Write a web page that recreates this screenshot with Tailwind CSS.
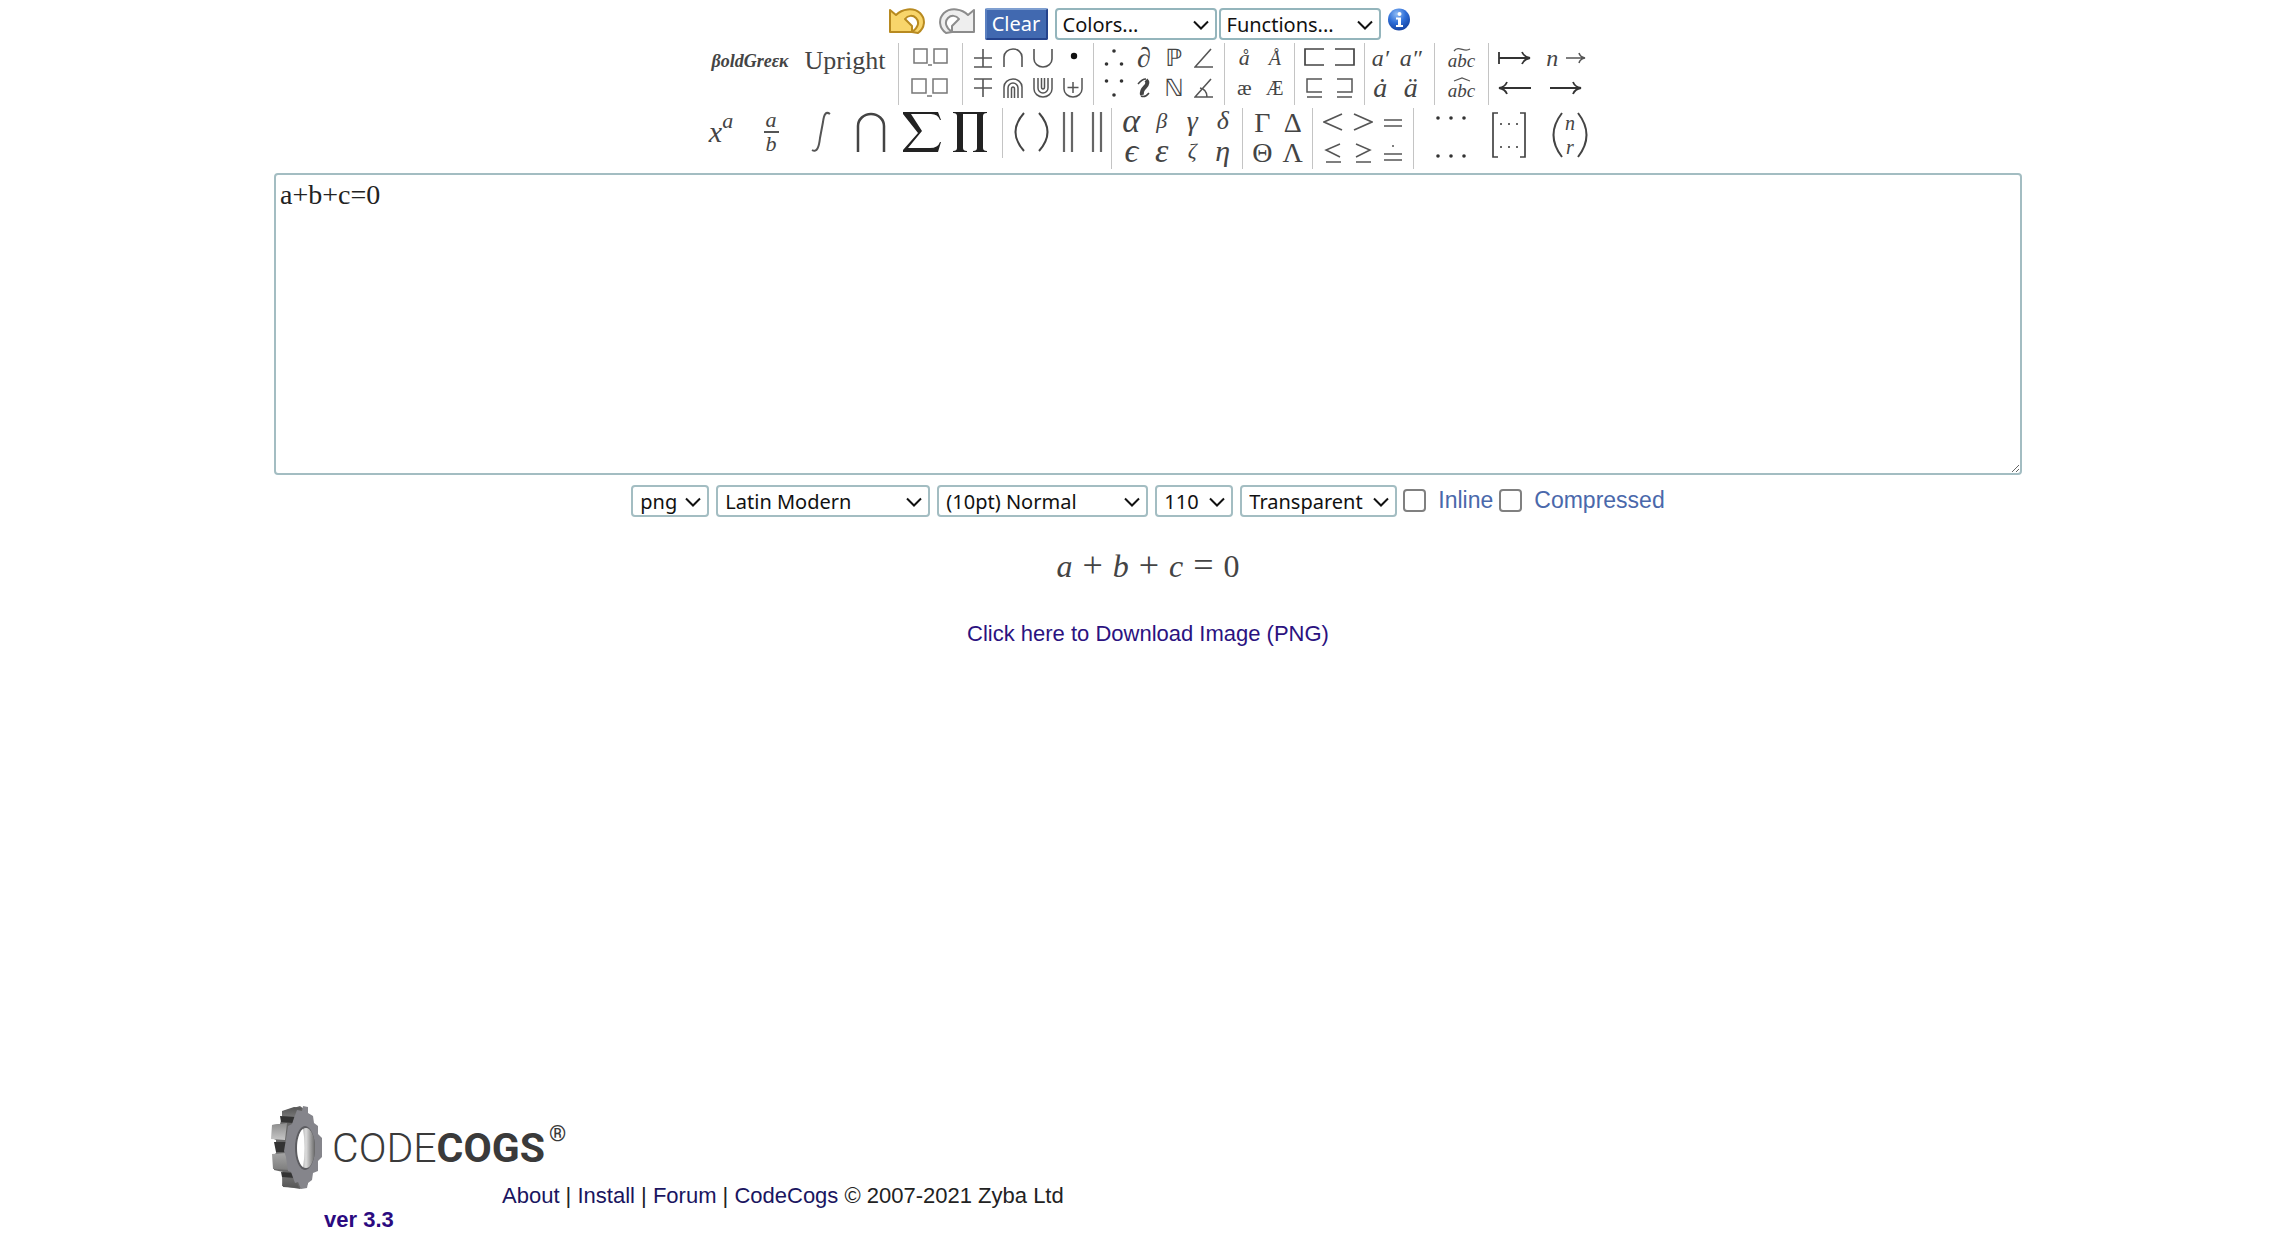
<!DOCTYPE html>
<html lang="en">
<head>
    <meta charset="UTF-8">
    <meta name="viewport" content="width=device-width, initial-scale=1.0">
    <title>CodeCogs Equation Editor</title>
    <script src="https://cdn.jsdelivr.net/npm/@tailwindcss/browser@4"></script>
</head>
<body class="bg-white min-h-screen flex flex-col font-['Liberation_Sans',Arial,sans-serif] text-[22px] text-[#222]">

    <!-- shared symbols -->
    <svg class="hidden">
        <symbol id="chevron" viewBox="0 0 16 10"><path d="M1 1.5l7 7 7-7" fill="none" stroke="#111" stroke-width="2"/></symbol>
        <symbol id="undo" viewBox="0 0 36 26"><path d="M1 2l6 5C13 1 24-1 31 5c6 6 5 15-2 20l-6-1c6-4 8-10 4-14-3-3-8-3-11 1l7 7v6H1z" stroke-width="2" stroke-linejoin="round"/></symbol>
    </svg>

    <main class="px-[274px] pt-2 flex flex-col items-center">
        <!-- top bar -->
        <div class="flex h-8 pl-[3px] font-['Noto_Sans',Tahoma,sans-serif] text-[20px] text-[#111]">
            <button aria-label="Undo" class="w-9 h-[26px] mr-3.5"><svg class="w-9 h-[26px]" fill="#f8d56b" stroke="#b88a20"><use href="#undo"/></svg></button>
            <button aria-label="Redo" class="w-9 h-[26px] mr-2.5"><svg class="w-9 h-[26px] -scale-x-100" fill="#eee" stroke="#8c8c8c"><use href="#undo"/></svg></button>
            <button class="w-[63px] h-8 mr-[7px] bg-[#4169b0] text-white rounded-xs border-2 border-t-[#7f9fd0] border-l-[#5b80c0] border-r-[#24438c] border-b-[#24438c] leading-7">Clear</button>
            <div class="relative mr-0.5">
                <select aria-label="Colors" class="appearance-none w-[162px] h-8 pl-1.5 border-2 border-[#94b5bc] rounded-sm bg-white"><option>Colors...</option></select>
                <svg class="absolute right-2 top-3 w-4 h-2.5 pointer-events-none"><use href="#chevron"/></svg>
            </div>
            <div class="relative mr-1.5">
                <select aria-label="Functions" class="appearance-none w-[162px] h-8 pl-1.5 border-2 border-[#94b5bc] rounded-sm bg-white"><option>Functions...</option></select>
                <svg class="absolute right-2 top-3 w-4 h-2.5 pointer-events-none"><use href="#chevron"/></svg>
            </div>
            <a href="#" aria-label="Help" class="w-6 h-6">
                <svg class="w-6 h-6" viewBox="0 0 24 24">
                    <defs><radialGradient id="blue" cx=".4" cy=".25" r=".8"><stop offset="0" stop-color="#8fbcf5"/><stop offset=".5" stop-color="#2f6fd8"/><stop offset="1" stop-color="#123f9e"/></radialGradient></defs>
                    <circle cx="12" cy="11.500" r="11" fill="url(#blue)"/>
                    <circle cx="12.500" cy="6" r="2" fill="#fff"/><path d="M9 9.500h5v7.500h2v2H9v-2h2v-5.500H9z" fill="#fff"/>
                </svg>
            </a>
        </div>

        <!-- symbols, first row -->
        <div class="mt-[3px] flex h-[62px] w-[896px] font-['Liberation_Serif','DejaVu_Serif',serif] text-[22px] leading-[30px] text-[#444] [&_button]:flex [&_button]:items-center [&_button]:justify-center [&_button]:h-[30px]">
            <div class="flex w-[198px] pl-2 pt-[3px]">
                <button class="w-[84px] text-[18px] italic font-bold">βoldGreεκ</button>
                <button class="ml-3 w-[82px] text-[26px]">Upright</button>
            </div>
            <div class="w-16 border-l border-[#c4c4c4] flex flex-col items-center">
                <button class="w-10"><svg class="w-10 h-5" fill="none" stroke="#777" stroke-width="1.500"><path d="M3 1h13v14H3zM23 1h13v14H23zM17 17h4"/></svg></button>
                <button class="w-10"><svg class="w-10 h-5" fill="none" stroke="#777" stroke-width="1.500"><path d="M1 1h14v14H1zM22 1h14v14H22zM16 18h5"/></svg></button>
            </div>
            <div class="w-[131px] border-l border-[#c4c4c4] px-[5px] grid grid-cols-4 content-start [&_svg]:w-5 [&_svg]:h-5">
                <button><svg fill="none" stroke="#555" stroke-width="1.600"><path d="M1 10h18M10 1v18M1 19h18"/></svg></button>
                <button><svg fill="none" stroke="#555" stroke-width="1.600"><path d="M1 19V9a9 8 0 0 1 18 0v10"/></svg></button>
                <button><svg fill="none" stroke="#555" stroke-width="1.600"><path d="M1 1v10a9 8 0 0 0 18 0V1"/></svg></button>
                <button><svg fill="#111"><circle cx="11" cy="8" r="3.200"/></svg></button>
                <button><svg fill="none" stroke="#555" stroke-width="1.600"><path d="M1 1h18M1 10h18M10 1v18"/></svg></button>
                <button><svg fill="none" stroke="#555" stroke-width="1.500"><path d="M1 20V9a9 8 0 0 1 18 0v11M5 20V10a5 5 0 0 1 10 0v10M8.500 20V11a1.500 2 0 0 1 3 0v9"/></svg></button>
                <button><svg fill="none" stroke="#555" stroke-width="1.500"><path d="M1 0v11a9 8 0 0 0 18 0V0M5 0v10a5 5 0 0 0 10 0V0M8.500 0v9a1.500 2 0 0 0 3 0V0"/></svg></button>
                <button><svg fill="none" stroke="#555" stroke-width="1.500"><path d="M1 0v11a9 8 0 0 0 18 0V0M10 4v11M4.500 9.500h11"/></svg></button>
            </div>
            <div class="w-[131px] border-l border-[#c4c4c4] px-[5px] grid grid-cols-4 content-start [&_svg]:w-5 [&_svg]:h-5">
                <button><svg fill="#333"><circle cx="10" cy="3" r="1.800"/><circle cx="2.500" cy="16" r="1.800"/><circle cx="17.500" cy="16" r="1.800"/></svg></button>
                <button class="text-[28px] italic">∂</button>
                <button class="font-['DejaVu_Sans'] text-[24px]">ℙ</button>
                <button><svg fill="none" stroke="#555" stroke-width="1.600"><path d="M17 1L1 19h18"/></svg></button>
                <button><svg fill="#333"><circle cx="2.500" cy="3" r="1.800"/><circle cx="17.500" cy="3" r="1.800"/><circle cx="10" cy="17" r="1.800"/></svg></button>
                <button><svg fill="none" stroke="#444"><path stroke-width="1.500" d="M4 6q4-5 8-5M7 18q4 2 8-3"/><path stroke-width="4" d="M12 2q3 3-1 7t-3 8"/></svg></button>
                <button class="font-['DejaVu_Sans'] text-[24px]">ℕ</button>
                <button><svg fill="none" stroke="#555" stroke-width="1.600"><path d="M17 1L1 19h18M6 10c5 1 7 4 7 9"/></svg></button>
            </div>
            <div class="w-[70px] border-l border-[#c4c4c4] px-1 grid grid-cols-2 content-start text-[22px]">
                <button class="italic">å</button>
                <button class="italic text-[20px]">Å</button>
                <button>æ</button>
                <button class="text-[20px]">Æ</button>
            </div>
            <div class="w-[70px] border-l border-[#c4c4c4] px-1 grid grid-cols-2 content-start [&_svg]:w-5 [&_svg]:h-5">
                <button><svg fill="none" stroke="#444" stroke-width="1.700"><path d="M20 1H1v16h19"/></svg></button>
                <button><svg fill="none" stroke="#444" stroke-width="1.700"><path d="M0 1h19v16H0"/></svg></button>
                <button><svg fill="none" stroke="#555" stroke-width="1.500"><path d="M18 1H3v13h15M3 19h15"/></svg></button>
                <button><svg fill="none" stroke="#555" stroke-width="1.500"><path d="M2 1h15v13H2M2 19h15"/></svg></button>
            </div>
            <div class="w-[70px] border-l border-[#c4c4c4] pr-2 grid grid-cols-2 content-start italic text-[24px]">
                <button>a′</button>
                <button>a″</button>
                <button class="text-[28px]">ȧ</button>
                <button class="text-[28px]">ä</button>
            </div>
            <div class="w-[54px] border-l border-[#c4c4c4] flex flex-col items-center italic text-[19px]">
                <button class="relative w-8 pt-1.5">abc<svg class="absolute left-1 top-1 w-6 h-2" fill="none" stroke="#555" stroke-width="1.300"><path d="M4 4c5-6 10 2 16-2"/></svg></button>
                <button class="relative w-8 pt-1.5">abc<svg class="absolute left-1 top-1 w-6 h-2" fill="none" stroke="#555" stroke-width="1.300"><path d="M4 4l8-3 8 3"/></svg></button>
            </div>
            <div class="w-[108px] border-l border-[#c4c4c4] pr-1 grid grid-cols-2 content-start">
                <button><svg class="w-9 h-5" fill="none" stroke="#333" stroke-width="1.800"><path d="M2 4v12M2 10h30M25 4q2 5 8 6q-6 1-8 6"/></svg></button>
                <button class="italic text-[24px]">n<svg class="w-5 h-5 ml-2" fill="none" stroke="#555" stroke-width="1.500"><path d="M0 10h18M13 5q1 4 6 5q-5 1-6 5"/></svg></button>
                <button><svg class="w-9 h-5" fill="none" stroke="#333" stroke-width="1.800"><path d="M34 10H3M10 4q-2 5-8 6q6 1 8 6"/></svg></button>
                <button><svg class="w-9 h-5" fill="none" stroke="#333" stroke-width="1.800"><path d="M2 10h30M25 4q2 5 8 6q-6 1-8 6"/></svg></button>
            </div>
        </div>

        <!-- symbols, second row -->
        <div class="mt-[3px] flex h-[61px] w-[896px] font-['Liberation_Serif','DejaVu_Serif',serif] text-[26px] leading-[30px] text-[#444] [&_button]:flex [&_button]:items-center [&_button]:justify-center [&_button]:h-[30px]">
            <div class="w-[302px] flex items-start [&>button]:h-12">
                <button class="w-[42px] italic text-[30px]">x<sup class="text-[22px]">a</sup></button>
                <button class="w-[58px] flex-col italic text-[22px] leading-[22px]"><span class="px-0.5">a</span><span class="border-t-2 border-[#555] px-0.5">b</span></button>
                <button class="w-[42px]"><svg class="w-5 h-11" fill="none" stroke="#555" stroke-width="2"><path d="M1 40c5 3 7-3 8-12l3-16c1-8 3-11 7-8"/></svg></button>
                <button class="w-[58px]"><svg class="w-[30px] h-10" fill="none" stroke="#444" stroke-width="2.500"><path d="M2 40V14a13 12 0 0 1 26 0v26"/></svg></button>
                <button class="w-11"><svg class="w-10 h-10" fill="#222"><path d="M1 0h35l3 8h-1q-2-6-9-6H9l11 17L6 36h22q8 0 10-6h1l-3 10H1v-2l15-17L1 2z"/></svg></button>
                <button class="w-[52px]"><svg class="w-[34px] h-10" fill="#222"><path d="M0 0h34v1q-4 0-4 3v32q0 3 4 3v1H20v-1q4 0 4-3V2H10v34q0 3 4 3v1H0v-1q4 0 4-3V4q0-3-4-3z"/></svg></button>
            </div>
            <div class="w-[109px] h-[50px] border-l border-[#c4c4c4] flex pl-[11px] [&>button]:h-12">
                <button><svg class="w-9 h-10" fill="none" stroke="#444" stroke-width="2"><path d="M10 1q-17 19 0 38M25 1q17 19 0 38"/></svg></button>
                <button class="ml-3"><svg class="w-11 h-10" fill="none" stroke="#666" stroke-width="2.200"><path d="M2 0v40M10 0v40M31 0v40M39 0v40"/></svg></button>
            </div>
            <div class="w-[131px] border-l border-[#c4c4c4] px-1 grid grid-cols-4 content-start italic [&>button]:pb-1">
                <button class="text-[34px]">α</button>
                <button class="text-[22px]">β</button>
                <button class="text-[28px]">γ</button>
                <button>δ</button>
                <button class="text-[34px]">ϵ</button>
                <button class="text-[34px]">ε</button>
                <button class="text-[22px]">ζ</button>
                <button class="text-[30px]">η</button>
            </div>
            <div class="w-[70px] border-l border-[#c4c4c4] px-1 grid grid-cols-2 content-start text-[28px]">
                <button>Γ</button>
                <button>Δ</button>
                <button>Θ</button>
                <button>Λ</button>
            </div>
            <div class="w-[101px] border-l border-[#c4c4c4] px-[5px] grid grid-cols-3 content-start [&_svg]:w-5 [&_svg]:h-5">
                <button><svg fill="none" stroke="#555" stroke-width="1.700"><path d="M19 1L1 9l18 8"/></svg></button>
                <button><svg fill="none" stroke="#555" stroke-width="1.700"><path d="M1 1l18 8L1 17"/></svg></button>
                <button><svg fill="none" stroke="#555" stroke-width="1.700"><path d="M1 7h18M1 13h18"/></svg></button>
                <button><svg fill="none" stroke="#555" stroke-width="1.500"><path d="M17 1L3 7l14 7M3 19h15"/></svg></button>
                <button><svg fill="none" stroke="#555" stroke-width="1.500"><path d="M3 1l14 6-14 7M3 19h15"/></svg></button>
                <button><svg fill="none" stroke="#555" stroke-width="1.700"><path d="M1 11h18M1 17h18M9 3h2"/></svg></button>
            </div>
            <div class="w-[183px] border-l border-[#c4c4c4] flex items-start">
                <div class="w-[70px] pl-1 flex flex-col items-center gap-1">
                    <button><svg class="w-8 h-5" fill="#333"><circle cx="3" cy="5" r="1.800"/><circle cx="16" cy="5" r="1.800"/><circle cx="29" cy="5" r="1.800"/></svg></button>
                    <button><svg class="w-8 h-5" fill="#333"><circle cx="3" cy="9" r="1.800"/><circle cx="16" cy="9" r="1.800"/><circle cx="29" cy="9" r="1.800"/></svg></button>
                </div>
                <button class="mt-3 ml-2"><svg class="w-[34px] h-[46px]" fill="none" stroke="#444" stroke-width="1.700"><path d="M6 1H1v44h5M28 1h5v44h-5"/><path stroke="#666" stroke-width="2" d="M8 12h2M16 12h2M24 12h2M8 35h2M16 35h2M24 35h2"/></svg></button>
                <button class="relative mt-3 ml-[26px] w-9 flex-col italic text-[20px] leading-6"><svg class="absolute left-0 -top-2 w-9 h-[46px]" fill="none" stroke="#444" stroke-width="2"><path d="M10 1q-17 22 0 44M26 1q17 22 0 44"/></svg><span>n</span><span>r</span></button>
            </div>
        </div>

        <textarea aria-label="Equation" spellcheck="false" class="mt-1 w-full h-[302px] px-1 py-1 border-2 border-[#a3bdc2] rounded-sm font-['Liberation_Serif','Noto_Sans_CJK_SC',serif] text-[28px] leading-8 text-[#222]">a+b+c=0</textarea>

        <!-- output options -->
        <div class="mt-2.5 flex h-8 [&_select]:appearance-none [&_select]:h-8 [&_select]:pl-[7px] [&_select]:border-2 [&_select]:border-[#a3bdc2] [&_select]:rounded-sm [&_select]:bg-white [&_select]:font-['Noto_Sans',Tahoma,sans-serif] [&_select]:text-[20px] [&_select]:text-[#111]">
            <div class="relative mr-[7px]">
                <select aria-label="Format" class="w-[78px]"><option>png</option></select>
                <svg class="absolute right-2 top-3 w-4 h-2.5 pointer-events-none"><use href="#chevron"/></svg>
            </div>
            <div class="relative mr-[7px]">
                <select aria-label="Font" class="w-[214px]"><option>Latin Modern</option></select>
                <svg class="absolute right-2 top-3 w-4 h-2.5 pointer-events-none"><use href="#chevron"/></svg>
            </div>
            <div class="relative mr-[7px]">
                <select aria-label="Size" class="w-[211px]"><option>(10pt) Normal</option></select>
                <svg class="absolute right-2 top-3 w-4 h-2.5 pointer-events-none"><use href="#chevron"/></svg>
            </div>
            <div class="relative mr-[7px]">
                <select aria-label="Resolution" class="w-[78px]"><option>110</option></select>
                <svg class="absolute right-2 top-3 w-4 h-2.5 pointer-events-none"><use href="#chevron"/></svg>
            </div>
            <div class="relative mr-1.5">
                <select aria-label="Background" class="w-[157px]"><option>Transparent</option></select>
                <svg class="absolute right-2 top-3 w-4 h-2.5 pointer-events-none"><use href="#chevron"/></svg>
            </div>
            <input id="inline" type="checkbox" class="appearance-none mt-1 w-[23px] h-[23px] border-2 border-[#808080] rounded-sm">
            <label for="inline" class="ml-3 mr-1.5 text-[23px] leading-[30px] text-[#4a68ab]">Inline</label>
            <input id="compressed" type="checkbox" class="appearance-none mt-1 w-[23px] h-[23px] border-2 border-[#808080] rounded-sm">
            <label for="compressed" class="ml-3 text-[23px] leading-[30px] text-[#4a68ab]">Compressed</label>
        </div>

        <div class="mt-[30px] flex items-baseline gap-2.5 font-['Liberation_Serif',serif] text-[32px] leading-9 text-[#444] [&>span]:text-[36px]">
            <i>a</i><span>+</span><i>b</i><span>+</span><i>c</i><span>=</span>0
        </div>
        <a href="#" class="mt-9 leading-7 text-[#2b1280]">Click here to Download Image (PNG)</a>
    </main>

    <footer class="mt-auto pl-[270px] pb-[3px]">
        <div class="flex h-[78px]">
            <svg class="w-[54px] h-[84px] shrink-0" viewBox="0 0 54 84">
                <defs>
                    <linearGradient id="tooth" x1="0" x2="0" y1="0" y2="1"><stop offset="0" stop-color="#555"/><stop offset=".4" stop-color="#c4c4c4"/><stop offset="1" stop-color="#555"/></linearGradient>
                    <linearGradient id="bore" x1="0" x2="1"><stop offset="0" stop-color="#777"/><stop offset=".5" stop-color="#ddd"/><stop offset="1" stop-color="#666"/></linearGradient>
                </defs>
                <path d="M14 5L30 0l8 6v72l-8 5-18-3 1-14-9-2V49l2-2V34l-4-2V19l8-1z" fill="#666"/>
                <path d="M12 5l12-4 8 1-5 9-15-1zM2 19l15-2-2 17-14-1zM2 48l14-1 4 17-17-1zM12 70l14 4 3 8-16-1z" fill="url(#tooth)"/>
                <path d="M10 10l15 1-2 6-12-1zM4 36h12v10H6zM11 66l13 1 2 5-14-1z" fill="#333"/>
                <path d="M24 12l3-8 5 1 1-5 5 1v6l5 3 1 7 4 3v8l4 4v19l-4 4v10l-5 2-1 7-4 3-1 5-6 1-3-7-3 1-4-11-3-1-2-14-2-6 2-12 2-13 4-2z" fill="#85858b"/>
                <ellipse cx="35" cy="42" rx="10" ry="22" fill="#5c5c60"/>
                <ellipse cx="36" cy="42" rx="9" ry="20" fill="url(#bore)"/>
                <path d="M33 23c-4 3-6 11-6 19s2 16 6 19c2-12 2-26 0-38z" fill="#fff"/>
            </svg>
            <div class="ml-2 mt-4 flex font-['Roboto',sans-serif] text-[41px] leading-[52px] text-[#3a3a3a]"><span class="font-light">CODE</span><span class="font-bold">COGS</span><span class="ml-1 text-[22px] leading-6 font-bold">®</span></div>
        </div>
        <div class="pl-[232px] leading-6"><a href="#" class="text-[#1a1560]">About</a> | <a href="#" class="text-[#1a1560]">Install</a> | <a href="#" class="text-[#1a1560]">Forum</a> | <a href="#" class="text-[#1a1560]">CodeCogs</a> © 2007-2021 Zyba Ltd</div>
        <div class="pl-[54px] leading-6"><a href="#" class="font-bold text-[#2b0a80]">ver 3.3</a></div>
    </footer>
</body>
</html>
